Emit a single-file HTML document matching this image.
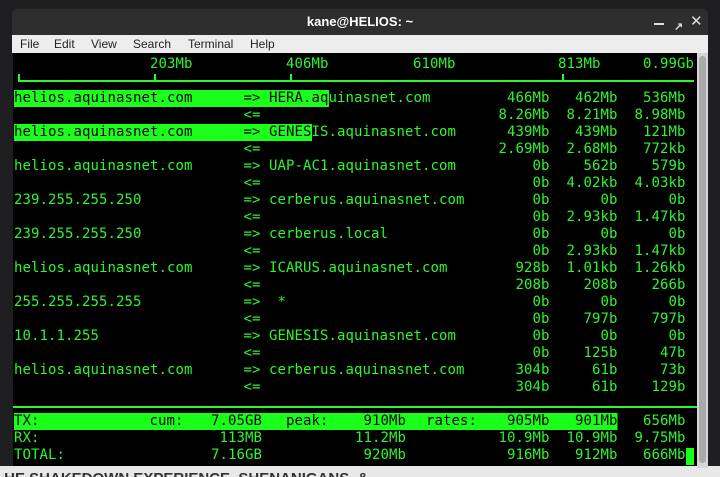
<!DOCTYPE html>
<html><head><meta charset="utf-8"><style>
*{margin:0;padding:0;box-sizing:border-box}
body{width:720px;height:477px;overflow:hidden;background:#1f1f22;position:relative;font-family:"Liberation Sans",sans-serif}
.title{position:absolute;left:12px;top:9px;width:696px;height:26px;background:#2e2e2e;border-radius:5px 5px 0 0;color:#fff;font-weight:bold;font-size:13px;text-align:center;line-height:26px}
.menu{position:absolute;left:12px;top:35px;width:696px;height:18px;background:#ededed;font-size:12px;color:#222}
.menu span{position:absolute;top:2px}
.term{position:absolute;left:13px;top:53px;width:684px;height:413px;background:#000}
.sb{position:absolute;left:697px;top:53px;width:11px;height:415px;background:#d6d6d6}
.sb div{position:absolute;left:2px;top:3px;width:7px;height:407px;background:#a9a9a9;border-radius:4px}
.w{position:absolute;left:0;top:2px;width:720px;height:475px}
.r{position:absolute;left:0;width:720px;height:17px;font-family:"DejaVu Sans Mono","Liberation Mono",monospace;font-size:14px;letter-spacing:0.07px;color:#2ef52e;line-height:17px;white-space:pre}
.r span{position:absolute;top:0}
.a{right:170.5px}.b{right:102.5px}.c{right:34.5px}
.hl{position:absolute;left:0;top:0;width:720px;height:17px;background:#1aff1a;color:#000}
.btm{position:absolute;left:0;top:466px;width:720px;height:11px;background:#e8e8e8;font-size:15px;font-weight:bold;color:#333;line-height:26px;overflow:hidden}
</style></head><body>
<div class="btm">&nbsp;HE SHAKEDOWN EXPERIENCE. SHENANIGANS. &amp;</div>
<div class="title">kane@HELIOS: ~
<span style="position:absolute;left:642px;top:14px;width:10px;height:2px;background:#ddd"></span>
<span style="position:absolute;left:662px;top:5px;font-size:11px;color:#ddd">&#x2197;</span>
<span style="position:absolute;left:678px;top:0;font-size:15px;font-weight:normal;color:#ddd">&#x2715;</span>
</div>
<div class="menu"><span style="left:8px">File</span><span style="left:42px">Edit</span><span style="left:79px">View</span><span style="left:121px">Search</span><span style="left:176px">Terminal</span><span style="left:238px">Help</span></div>
<div class="term"></div>
<div class="sb"><div></div></div>
<div class="w">
<div class="r" style="top:54px"><span style="left:150px">203Mb</span><span style="left:286px">406Mb</span><span style="left:413px">610Mb</span><span style="left:558px">813Mb</span><span style="left:643px">0.99Gb</span></div>
<div style="position:absolute;left:18px;top:78px;width:676px;height:2px;background:#2ef52e"></div>
<div style="position:absolute;left:18px;top:72px;width:2px;height:7px;background:#2ef52e"></div>
<div style="position:absolute;left:154px;top:72px;width:2px;height:7px;background:#2ef52e"></div>
<div style="position:absolute;left:290px;top:72px;width:2px;height:7px;background:#2ef52e"></div>
<div style="position:absolute;left:562px;top:72px;width:2px;height:7px;background:#2ef52e"></div>

<div class="r" style="top:88px"><span style="left:14px">helios.aquinasnet.com</span><span style="left:243.5px">=&gt; HERA.aquinasnet.com</span><span class="a">466Mb</span><span class="b">462Mb</span><span class="c">536Mb</span>
<div class="hl" style="clip-path:inset(0 391px 0 14px)"><span style="left:14px">helios.aquinasnet.com</span><span style="left:243.5px">=&gt; HERA.aquinasnet.com</span></div></div>
<div class="r" style="top:105px"><span style="left:243.5px">&lt;=</span><span class="a">8.26Mb</span><span class="b">8.21Mb</span><span class="c">8.98Mb</span></div>
<div class="r" style="top:122px"><span style="left:14px">helios.aquinasnet.com</span><span style="left:243.5px">=&gt; GENESIS.aquinasnet.com</span><span class="a">439Mb</span><span class="b">439Mb</span><span class="c">121Mb</span>
<div class="hl" style="clip-path:inset(0 408px 0 14px)"><span style="left:14px">helios.aquinasnet.com</span><span style="left:243.5px">=&gt; GENESIS.aquinasnet.com</span></div></div>
<div class="r" style="top:139px"><span style="left:243.5px">&lt;=</span><span class="a">2.69Mb</span><span class="b">2.68Mb</span><span class="c">772kb</span></div>
<div class="r" style="top:156px"><span style="left:14px">helios.aquinasnet.com</span><span style="left:243.5px">=&gt; UAP-AC1.aquinasnet.com</span><span class="a">0b</span><span class="b">562b</span><span class="c">579b</span></div>
<div class="r" style="top:173px"><span style="left:243.5px">&lt;=</span><span class="a">0b</span><span class="b">4.02kb</span><span class="c">4.03kb</span></div>
<div class="r" style="top:190px"><span style="left:14px">239.255.255.250</span><span style="left:243.5px">=&gt; cerberus.aquinasnet.com</span><span class="a">0b</span><span class="b">0b</span><span class="c">0b</span></div>
<div class="r" style="top:207px"><span style="left:243.5px">&lt;=</span><span class="a">0b</span><span class="b">2.93kb</span><span class="c">1.47kb</span></div>
<div class="r" style="top:224px"><span style="left:14px">239.255.255.250</span><span style="left:243.5px">=&gt; cerberus.local</span><span class="a">0b</span><span class="b">0b</span><span class="c">0b</span></div>
<div class="r" style="top:241px"><span style="left:243.5px">&lt;=</span><span class="a">0b</span><span class="b">2.93kb</span><span class="c">1.47kb</span></div>
<div class="r" style="top:258px"><span style="left:14px">helios.aquinasnet.com</span><span style="left:243.5px">=&gt; ICARUS.aquinasnet.com</span><span class="a">928b</span><span class="b">1.01kb</span><span class="c">1.26kb</span></div>
<div class="r" style="top:275px"><span style="left:243.5px">&lt;=</span><span class="a">208b</span><span class="b">208b</span><span class="c">266b</span></div>
<div class="r" style="top:292px"><span style="left:14px">255.255.255.255</span><span style="left:243.5px">=&gt;  *</span><span class="a">0b</span><span class="b">0b</span><span class="c">0b</span></div>
<div class="r" style="top:309px"><span style="left:243.5px">&lt;=</span><span class="a">0b</span><span class="b">797b</span><span class="c">797b</span></div>
<div class="r" style="top:326px"><span style="left:14px">10.1.1.255</span><span style="left:243.5px">=&gt; GENESIS.aquinasnet.com</span><span class="a">0b</span><span class="b">0b</span><span class="c">0b</span></div>
<div class="r" style="top:343px"><span style="left:243.5px">&lt;=</span><span class="a">0b</span><span class="b">125b</span><span class="c">47b</span></div>
<div class="r" style="top:360px"><span style="left:14px">helios.aquinasnet.com</span><span style="left:243.5px">=&gt; cerberus.aquinasnet.com</span><span class="a">304b</span><span class="b">61b</span><span class="c">73b</span></div>
<div class="r" style="top:377px"><span style="left:243.5px">&lt;=</span><span class="a">304b</span><span class="b">61b</span><span class="c">129b</span></div>

<div style="position:absolute;left:13px;top:404px;width:684px;height:2px;background:#2ef52e"></div>

<div class="r" style="top:411px"><span style="left:14px">TX:</span><span style="right:536.5px">cum:</span><span style="right:458px">7.05GB</span><span style="left:286px">peak:</span><span style="right:314px">910Mb</span><span style="left:426px">rates:</span><span class="a">905Mb</span><span class="b">901Mb</span><span class="c">656Mb</span>
<div class="hl" style="clip-path:inset(0 102.5px 0 14px)"><span style="left:14px">TX:</span><span style="right:536.5px">cum:</span><span style="right:458px">7.05GB</span><span style="left:286px">peak:</span><span style="right:314px">910Mb</span><span style="left:426px">rates:</span><span class="a">905Mb</span><span class="b">901Mb</span></div></div>
<div class="r" style="top:428px"><span style="left:14px">RX:</span><span style="right:458px">113MB</span><span style="right:314px">11.2Mb</span><span class="a">10.9Mb</span><span class="b">10.9Mb</span><span class="c">9.75Mb</span></div>
<div class="r" style="top:445px"><span style="left:14px">TOTAL:</span><span style="right:458px">7.16GB</span><span style="right:314px">920Mb</span><span class="a">916Mb</span><span class="b">912Mb</span><span class="c">666Mb</span></div>
<div style="position:absolute;left:686px;top:446px;width:8px;height:17px;background:#1aff1a"></div>
</div>
</body></html>
